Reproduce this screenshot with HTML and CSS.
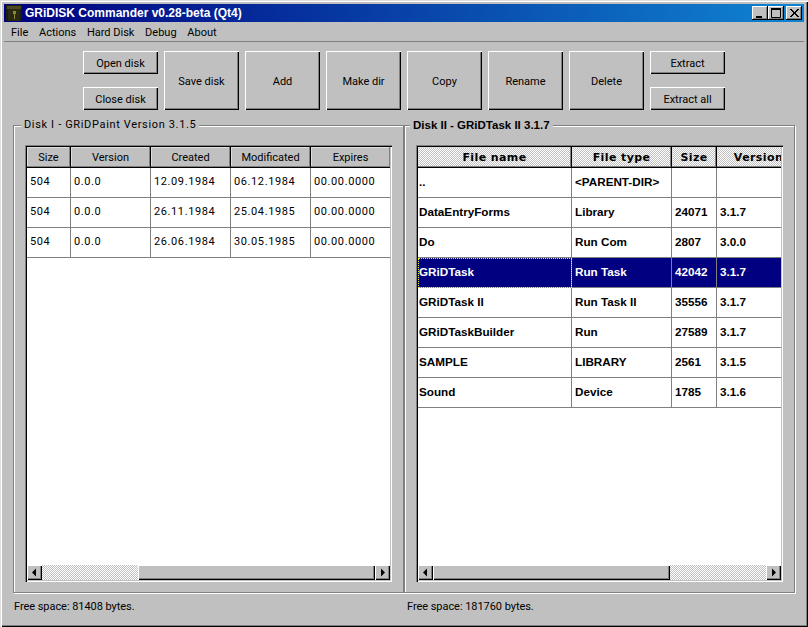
FILE: index.html
```html
<!DOCTYPE html>
<html lang="en">
<head>
<meta charset="utf-8">
<title>GRiDISK Commander</title>
<link rel="stylesheet" href="styles.css">
</head>
<body>
<div class="window">
  <div class="titlebar">
    <svg class="appicon" width="16" height="16" viewBox="0 0 16 16"><rect width="16" height="16" fill="#1c1c10"/><rect x="1" y="1" width="14" height="3" fill="#4a4a20"/><rect x="2" y="4" width="12" height="12" fill="#2a2a14"/><rect x="7" y="6" width="3" height="3" fill="#8a8a30"/><rect x="8" y="9" width="1" height="5" fill="#8a8a30"/></svg>
    <span class="title">GRiDISK Commander v0.28-beta (Qt4)</span>
    <div class="winbtns">
      <span class="winbtn"><svg width="16" height="14" viewBox="0 0 16 14"><rect x="4" y="10" width="6" height="2" fill="#000"/></svg></span>
      <span class="winbtn"><svg width="16" height="14" viewBox="0 0 16 14"><path d="M3.500 2.500h9v9h-9z" fill="none" stroke="#000"/><rect x="3" y="2" width="10" height="2" fill="#000"/></svg></span>
      <span class="winbtn close"><svg width="16" height="14" viewBox="0 0 16 14"><path d="M4 3l8 8M5 3l8 8M12 3l-8 8M13 3l-8 8" stroke="#000" fill="none"/></svg></span>
    </div>
  </div>
  <div class="menubar">
    <span>File</span><span>Actions</span><span>Hard Disk</span><span>Debug</span><span>About</span>
  </div>
  <div class="toolbar">
    <button class="btn">Open disk</button>
    <button class="btn tall">Save disk</button>
    <button class="btn tall">Add</button>
    <button class="btn tall">Make dir</button>
    <button class="btn tall">Copy</button>
    <button class="btn tall">Rename</button>
    <button class="btn tall">Delete</button>
    <button class="btn">Extract</button>
    <button class="btn">Close disk</button>
    <button class="btn">Extract all</button>
  </div>
  <div class="panels">
    <section class="group">
      <div class="legend">Disk I - GRiDPaint Version 3.1.5</div>
      <div class="listview">
        <div class="viewport">
          <table class="grid left">
            <colgroup><col class="c44"><col class="c80"><col class="c80"><col class="c80"><col class="c80"></colgroup>
            <thead><tr><th>Size</th><th>Version</th><th>Created</th><th>Modificated</th><th>Expires</th></tr></thead>
            <tbody>
              <tr><td>504</td><td>0.0.0</td><td>12.09.1984</td><td>06.12.1984</td><td>00.00.0000</td></tr>
              <tr><td>504</td><td>0.0.0</td><td>26.11.1984</td><td>25.04.1985</td><td>00.00.0000</td></tr>
              <tr><td>504</td><td>0.0.0</td><td>26.06.1984</td><td>30.05.1985</td><td>00.00.0000</td></tr>
            </tbody>
          </table>
        </div>
        <div class="scrollbar">
          <span class="arrow"><svg width="15" height="15" viewBox="0 0 15 15"><path d="M9 3.500v8L5 7.500z" fill="#000"/></svg></span>
          <span class="track t96"></span>
          <span class="thumb grow"></span>
          <span class="arrow"><svg width="15" height="15" viewBox="0 0 15 15"><path d="M6 3.500v8l4-4z" fill="#000"/></svg></span>
        </div>
      </div>
    </section>
    <section class="group">
      <div class="legend strong">Disk II - GRiDTask II 3.1.7</div>
      <div class="listview">
        <div class="viewport">
          <table class="grid right">
            <colgroup><col class="c154"><col class="c100"><col class="c45"><col class="c84"></colgroup>
            <thead><tr><th>File name</th><th>File type</th><th>Size</th><th>Version</th></tr></thead>
            <tbody>
              <tr><td>..</td><td>&lt;PARENT-DIR&gt;</td><td></td><td></td></tr>
              <tr><td>DataEntryForms</td><td>Library</td><td>24071</td><td>3.1.7</td></tr>
              <tr><td>Do</td><td>Run Com</td><td>2807</td><td>3.0.0</td></tr>
              <tr class="sel"><td class="cur">GRiDTask</td><td>Run Task</td><td>42042</td><td>3.1.7</td></tr>
              <tr><td>GRiDTask II</td><td>Run Task II</td><td>35556</td><td>3.1.7</td></tr>
              <tr><td>GRiDTaskBuilder</td><td>Run</td><td>27589</td><td>3.1.7</td></tr>
              <tr><td>SAMPLE</td><td>LIBRARY</td><td>2561</td><td>3.1.5</td></tr>
              <tr><td>Sound</td><td>Device</td><td>1785</td><td>3.1.6</td></tr>
            </tbody>
          </table>
        </div>
        <div class="scrollbar">
          <span class="arrow"><svg width="15" height="15" viewBox="0 0 15 15"><path d="M9 3.500v8L5 7.500z" fill="#000"/></svg></span>
          <span class="thumb grow"></span>
          <span class="track t96"></span>
          <span class="arrow"><svg width="15" height="15" viewBox="0 0 15 15"><path d="M6 3.500v8l4-4z" fill="#000"/></svg></span>
        </div>
      </div>
    </section>
  </div>
  <div class="status">
    <span>Free space: 81408 bytes.</span>
    <span>Free space: 181760 bytes.</span>
  </div>
</div>
</body>
</html>
```
FILE: styles.css
```css
* { box-sizing: border-box; }
html, body { margin: 0; padding: 0; }
body { width: 808px; height: 627px; overflow: hidden; background: #c0c0c0; }
.window {
  width: 808px; height: 627px; background: #c0c0c0;
  padding: 4px 4px 0;
  font: 11px/1 Roboto, "Liberation Sans", Arial, sans-serif; color: #000;
  box-shadow: inset 1px 1px #dfdfdf, inset 2px 2px #fff, inset -1px -1px #000, inset -2px -2px #808080;
  display: flex; flex-direction: column;
}
.titlebar {
  height: 18px; flex: none; display: flex; align-items: center;
  background: linear-gradient(90deg, #000080, #1084d0);
  color: #fff; padding: 0 2px;
}
.appicon { flex: none; }
.title { font: bold 12px/1 "Liberation Sans", sans-serif; margin-left: 3px; }
.winbtns { margin-left: auto; display: flex; }
.winbtn {
  width: 16px; height: 14px; background: #c0c0c0; display: block;
  box-shadow: inset -1px -1px #000, inset 1px 1px #fff, inset -2px -2px #808080;
}
.winbtn.close { margin-left: 2px; }
.menubar {
  height: 20px; flex: none; display: flex; align-items: center; gap: 10.700px;
  padding: 1px 0 0 7px; border-bottom: 1px solid #808080;
}
.toolbar {
  flex: none; display: grid; padding: 9px 0 0 79px;
  grid-template-columns: repeat(8, 75px); column-gap: 6px;
  grid-template-rows: 23px 23px; row-gap: 13px;
}
.btn {
  font: inherit; color: #000; padding: 1px 0 0; margin: 0; border: 0; background: #c0c0c0;
  box-shadow: inset 1px 1px #fff, inset -1px -1px #000, inset -2px -2px #808080;
}
.btn.tall { grid-row: span 2; }
.panels {
  flex: none; display: grid; grid-template-columns: 391px 391px; margin: 15px 0 0 9px; height: 468px;
}
.group {
  border: 1px solid #808080; display: flex; flex-direction: column;
  box-shadow: inset 1px 1px #fff, 1px 1px #fff;
  padding: 0 11px 10px 11px;
}
.legend {
  width: fit-content; background: #c0c0c0; padding: 0 3px; height: 14px; line-height: 14px;
  margin: -8px 0 0 -4px; flex: none; letter-spacing: .65px;
}
.legend.strong { font: bold 11.500px/14px "Liberation Sans", sans-serif; letter-spacing: 0; margin-left: -6px; }
.listview {
  flex: 1; margin-top: 13px; display: flex; flex-direction: column; min-height: 0; background: #fff;
  box-shadow: inset 1px 1px #808080, inset 2px 2px #000, inset -1px -1px #fff, inset -2px -2px #c0c0c0;
  padding: 2px;
}
.viewport { flex: 1; overflow: hidden; min-height: 0; }
.grid { border-collapse: separate; border-spacing: 0; table-layout: fixed; }
.c44 { width: 44px; } .c45 { width: 45px; } .c80 { width: 80px; } .c84 { width: 84px; } .c100 { width: 100px; } .c154 { width: 154px; }
.left { width: 364px; }
.right { width: 383px; }
.grid th {
  height: 21px; padding: 1px 0 0; font-weight: normal; text-align: center; background: #c0c0c0;
  border-right: 1px solid #000; border-bottom: 1px solid #000;
  box-shadow: inset -1px -1px #808080, inset 1px 1px #dfdfdf;
}
.grid td {
  height: 30px; padding: 0 0 2px 3px; white-space: nowrap;
  border-right: 1px solid #808080; border-bottom: 1px solid #808080;
}
.left td { letter-spacing: .6px; }
.right th {
  font: bold 11px/1 "DejaVu Sans", sans-serif; letter-spacing: .4px;
  background: conic-gradient(#fff 25%, #c0c0c0 0 50%, #fff 0 75%, #c0c0c0 0) 0 0 / 2px 2px;
}
.right td { font: bold 11.700px/1 "Liberation Sans", sans-serif; }
.right td:first-child { padding-left: 1px; }
.sel td { background: #000080; color: #fff; }
.sel td.cur { outline: 1px dotted #ff0; outline-offset: -1px; }
.scrollbar { flex: none; height: 15px; display: flex; background: #c0c0c0; }
.arrow {
  width: 15px; height: 15px; flex: none; background: #c0c0c0; display: block;
  box-shadow: inset 1px 1px #fff, inset -1px -1px #000, inset -2px -2px #808080;
}
.arrow svg { display: block; }
.track {
  display: block; flex: none;
  background: conic-gradient(#fff 25%, #c0c0c0 0 50%, #fff 0 75%, #c0c0c0 0) 0 0 / 2px 2px;
}
.t96 { width: 96px; }
.thumb {
  display: block; background: #c0c0c0;
  box-shadow: inset 1px 1px #fff, inset -1px -1px #000, inset -2px -2px #808080;
}
.grow { flex: 1; }
.status {
  flex: 1; display: grid; grid-template-columns: 393px 1fr; padding: 0 0 7px 10px; align-items: center; letter-spacing: -.05px;
}
```
